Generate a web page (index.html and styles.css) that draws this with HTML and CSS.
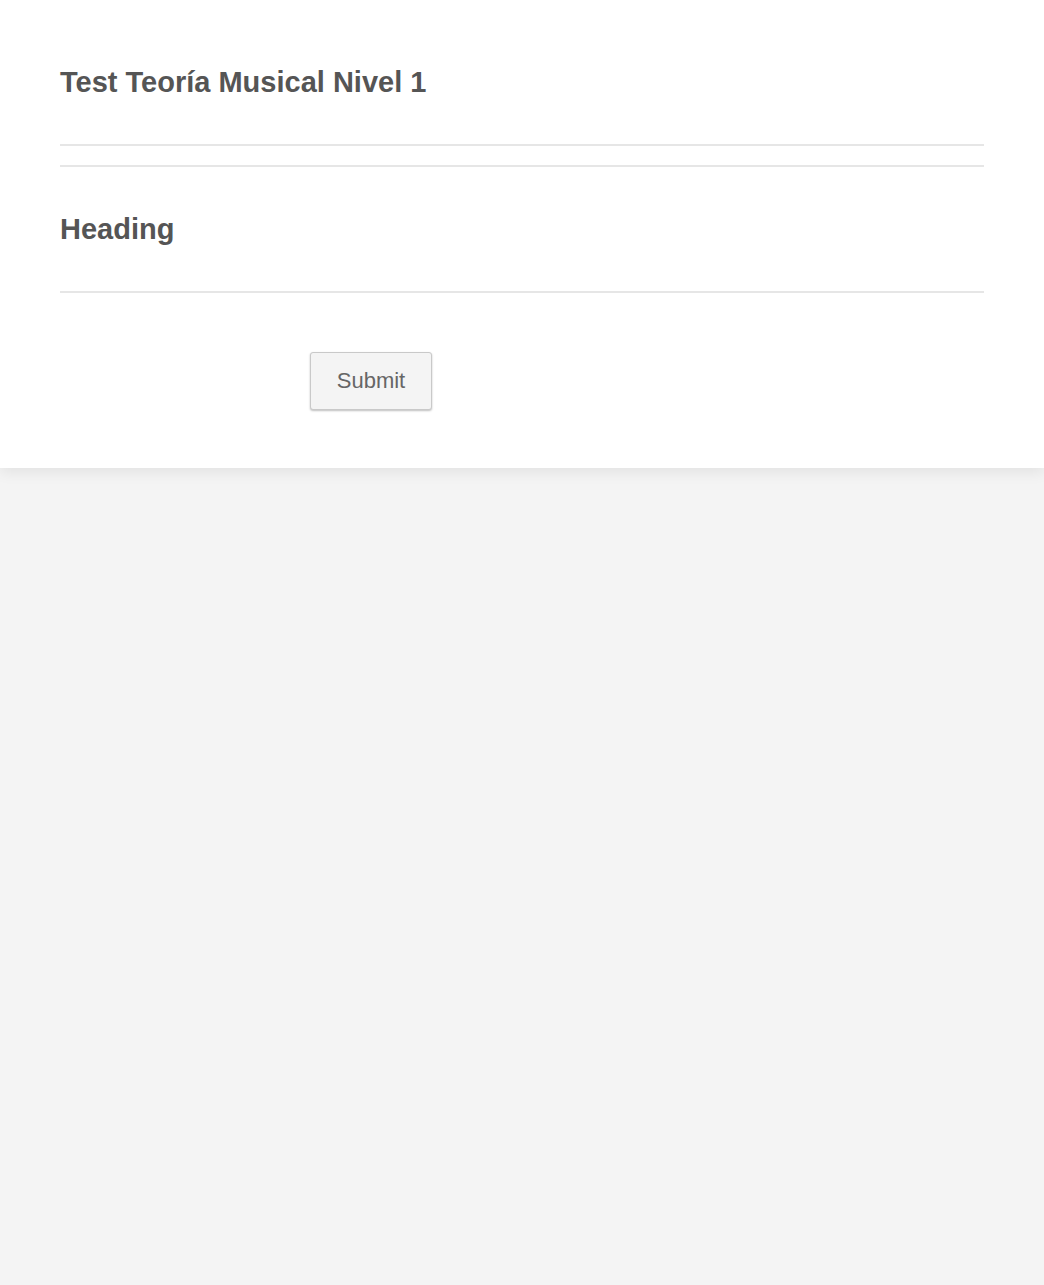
FILE: index.html
```html
<!DOCTYPE html>
<html lang="es">
<head>
<meta charset="utf-8">
<title>Test Teoría Musical Nivel 1</title>
<link rel="stylesheet" href="styles.css">
</head>
<body>
<div class="form-card">
  <div class="section section-title">
    <h1 class="form-title">Test Teoría Musical Nivel 1</h1>
  </div>
  <div class="section section-heading">
    <h2 class="form-heading">Heading</h2>
  </div>
  <div class="section-submit">
    <button class="submit-btn" type="button">Submit</button>
  </div>
</div>
</body>
</html>
```

FILE: styles.css
```css
html, body {
  margin: 0;
  padding: 0;
}
body {
  background: #f4f4f4;
  font-family: "Liberation Sans", Arial, sans-serif;
  min-height: 1285px;
}
.form-card {
  background: #ffffff;
  padding: 0 60px;
  box-shadow: 0 4px 14px rgba(0, 0, 0, 0.08);
}
.section {
  border-bottom: 2px solid #e6e6e6;
}
.section-title {
  padding: 64px 0 44px;
}
.section-heading {
  border-top: 2px solid #e6e6e6;
  margin-top: 19px;
  padding: 44px 0 44px;
}
.form-title,
.form-heading {
  margin: 0;
  font-size: 29px;
  line-height: 36px;
  font-weight: bold;
  color: #555555;
}
.section-submit {
  padding: 59px 0 58px 250px;
}
.submit-btn {
  display: block;
  width: 122px;
  height: 58px;
  background: #f4f4f4;
  border: 1px solid #c9c9c9;
  border-radius: 3px;
  box-shadow: 0 1px 2px rgba(0, 0, 0, 0.25);
  font-family: "Liberation Sans", Arial, sans-serif;
  font-size: 22px;
  color: #666666;
  padding: 0;
}
```
